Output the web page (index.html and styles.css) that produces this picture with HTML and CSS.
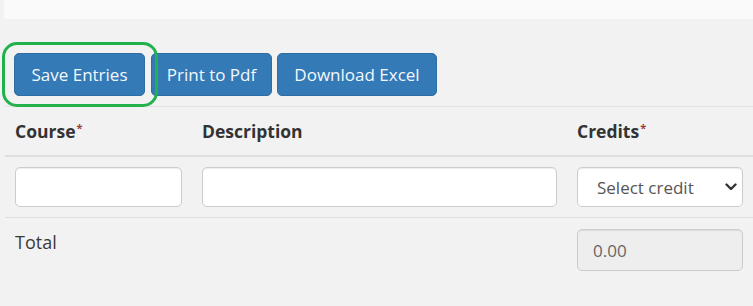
FILE: index.html
```html
<!DOCTYPE html>
<html lang="en">
<head>
<meta charset="utf-8">
<title>Course Entries</title>
<link rel="stylesheet" href="styles.css">
</head>
<body>
<div class="page">
  <div class="top-panel"></div>
  <div class="toolbar">
    <button class="btn btn-save" type="button">Save Entries</button>
    <button class="btn btn-print" type="button">Print to Pdf</button>
    <button class="btn btn-excel" type="button">Download Excel</button>
  </div>
  <span class="highlight" aria-hidden="true"></span>
  <div class="entries">
    <div class="row head">
      <div class="cell">Course<span class="req">*</span></div>
      <div class="cell">Description</div>
      <div class="cell">Credits<span class="req">*</span></div>
    </div>
    <div class="row body">
      <div class="cell"><input class="field" type="text"></div>
      <div class="cell"><input class="field" type="text"></div>
      <div class="cell">
        <div class="select-wrap">
          <select class="field select">
            <option>Select credit</option>
          </select>
          <svg class="chev" width="12" height="8" viewBox="0 0 12 8" aria-hidden="true"><path d="M1.5 1.5 L6 6 L10.5 1.5" fill="none" stroke="#333" stroke-width="2.4" stroke-linecap="round" stroke-linejoin="round"/></svg>
        </div>
      </div>
    </div>
    <div class="row total">
      <div class="cell total-label">Total</div>
      <div class="cell"></div>
      <div class="cell"><input class="field total-field" type="text" value="0.00" disabled></div>
    </div>
  </div>
</div>
</body>
</html>
```

FILE: styles.css
```css
html, body {
  margin: 0;
  padding: 0;
  background: #f2f2f2;
}

body {
  font-family: "Open Sans", "Liberation Sans", sans-serif;
  font-size: 17.5px;
  line-height: 25px;
  color: #333;
}

.page {
  position: relative;
  width: 753px;
  height: 306px;
  overflow: hidden;
}

.top-panel {
  margin-left: 4px;
  height: 19px;
  background: #fafafa;
}

.toolbar {
  display: flex;
  margin-top: 34px;
  padding-left: 14px;
  height: 43px;
}

.btn {
  font-family: inherit;
  font-size: 17px;
  line-height: 25px;
  white-space: nowrap;
  color: #f4f8fc;
  background: #337ab7;
  border: 1px solid #2e6da4;
  border-radius: 5px;
  height: 43px;
  padding: 0;
  margin: 0;
  cursor: pointer;
}

.btn-save { width: 131px; }
.btn-print { width: 121px; margin-left: 6px; }
.btn-excel { width: 160px; margin-left: 5px; }

.highlight {
  position: absolute;
  left: 2px;
  top: 42px;
  width: 156px;
  height: 65px;
  box-sizing: border-box;
  border: 3.5px solid #22b14c;
  border-radius: 15px;
}

.entries {
  margin-top: 10px;
  margin-left: 5px;
  border-top: 1px solid #e3e3e3;
}

.row {
  display: grid;
  grid-template-columns: 187px 375px 1fr;
}

.cell {
  padding: 0 10px;
}

.head {
  padding: 12px 0 11px;
  border-bottom: 2px solid #dedede;
  font-weight: 700;
  font-size: 17.5px;
  color: #333;
}

.req {
  position: relative;
  top: -6px;
  line-height: 0;
  color: #a33a38;
  font-size: 11px;
  margin-left: 1px;
}

.body {
  padding: 10px 0;
  border-bottom: 1px solid #dedede;
}

.total {
  padding: 10px 0;
}

.total .cell:last-child {
  padding-top: 1px;
}

.field {
  display: block;
  box-sizing: border-box;
  width: 100%;
  height: 40px;
  margin: 0;
  padding: 0 15px;
  font-family: inherit;
  font-size: 17px;
  color: #555;
  background: #fff;
  border: 1px solid #ccc;
  border-radius: 5px;
  box-shadow: inset 0 1px 1px rgba(0, 0, 0, 0.075);
}

.select-wrap {
  position: relative;
}

.select {
  appearance: none;
  -webkit-appearance: none;
  padding-left: 19px;
}

.chev {
  position: absolute;
  right: 6px;
  top: 16px;
}

.total-label {
  padding-top: 2px;
  font-size: 18px;
  color: #3a3a3a;
}

.total-field {
  height: 42px;
  background: #eee;
  color: #666;
  cursor: not-allowed;
}
```
